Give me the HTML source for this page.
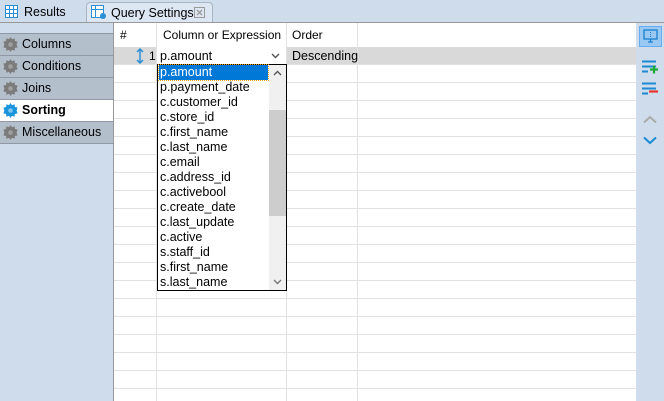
<!DOCTYPE html><html><head><style>
*{margin:0;padding:0;box-sizing:border-box}
body{width:664px;height:401px;background:#cedcec;font-family:"Liberation Sans","DejaVu Sans",sans-serif;font-size:12px;position:relative;overflow:hidden;color:#000}
.a{position:absolute}
.tab{position:absolute;height:22px;line-height:22px;font-size:12.5px}
.lt{position:absolute;left:0;width:113px;height:22px;background:#b4bfcc;border-top:1px solid #8f98a4;line-height:20px;padding-left:22px;font-size:12.5px}
.lt svg{position:absolute;left:3px;top:3px}
.hl{position:absolute;left:114px;width:522px;height:1px;background:#e2e2e2}
.vl{position:absolute;top:23px;width:1px;height:378px;background:#e2e2e2}
.it{position:absolute;left:160px;height:15px;line-height:15px;font-size:12.5px}
</style></head><body>
<svg width="0" height="0" style="position:absolute"><defs><g id="g"><path d="M7.5 0L9 2.2L11.6 1.3L11.9 4L14.6 4.6L13.6 7.5L14.6 10.4L11.9 11L11.6 13.7L9 12.8L7.5 15L6 12.8L3.4 13.7L3.1 11L0.4 10.4L1.4 7.5L0.4 4.6L3.1 4L3.4 1.3L6 2.2Z"/></g></defs></svg>
<div class="tab" style="left:0;top:1px;width:85px;padding-left:24px">Results</div>
<svg class="a" style="left:5px;top:5px" width="13" height="13"><rect x="0.5" y="0.5" width="12" height="12" fill="#fff" stroke="#2b8fd6"/><path d="M0 4.5H13M0 8.5H13M4.5 0V13M8.5 0V13" stroke="#2b8fd6"/></svg>
<div class="a" style="left:86px;top:2px;width:127px;height:21px;background:#dde7f3;border:1px solid #aab5c2;border-bottom:none;border-radius:4px 4px 0 0"></div>
<svg class="a" style="left:91px;top:5px" width="16" height="15"><rect x="0.5" y="0.5" width="12" height="12" fill="#fff" stroke="#2b8fd6"/><path d="M0 4.5H13M4.5 0V13" stroke="#2b8fd6"/><circle cx="12" cy="11" r="3" fill="#2b8fd6"/></svg>
<div class="tab" style="left:111px;top:2px">Query Settings</div>
<svg class="a" style="left:194px;top:7px" width="11" height="11"><rect x="0.5" y="0.5" width="10" height="10" fill="none" stroke="#999"/><path d="M3 3L8 8M8 3L3 8" stroke="#999" stroke-width="1.3"/></svg>
<div class="a" style="left:0;top:22px;width:664px;height:1px;background:#999"></div>
<div class="a" style="left:114px;top:23px;width:522px;height:378px;background:#fff"></div>
<div class="a" style="left:113px;top:23px;width:1px;height:378px;background:#999"></div>
<div class="lt" style="top:33px"><svg width="15" height="15" fill="#7b7b7b"><use href="#g"/><circle cx="7.5" cy="7.5" r="2.3" fill="#a0a0a0"/></svg>Columns</div>
<div class="lt" style="top:55px"><svg width="15" height="15" fill="#7b7b7b"><use href="#g"/><circle cx="7.5" cy="7.5" r="2.3" fill="#a0a0a0"/></svg>Conditions</div>
<div class="lt" style="top:77px"><svg width="15" height="15" fill="#7b7b7b"><use href="#g"/><circle cx="7.5" cy="7.5" r="2.3" fill="#a0a0a0"/></svg>Joins</div>
<div class="lt" style="top:99px;background:#fff;font-weight:bold"><svg width="15" height="15" fill="#1a94db"><use href="#g"/><circle cx="7.5" cy="7.5" r="2.3" fill="#7cc6f0"/></svg>Sorting</div>
<div class="lt" style="top:121px;border-bottom:1px solid #8f98a4;height:23px"><svg width="15" height="15" fill="#7b7b7b"><use href="#g"/><circle cx="7.5" cy="7.5" r="2.3" fill="#a0a0a0"/></svg>Miscellaneous</div>
<div class="a" style="left:114px;top:47px;width:522px;height:18px;background:#d9d9d9"></div>
<div class="hl" style="top:64px"></div>
<div class="hl" style="top:82px"></div><div class="hl" style="top:100px"></div><div class="hl" style="top:118px"></div><div class="hl" style="top:136px"></div><div class="hl" style="top:154px"></div><div class="hl" style="top:172px"></div><div class="hl" style="top:190px"></div><div class="hl" style="top:208px"></div><div class="hl" style="top:226px"></div><div class="hl" style="top:244px"></div><div class="hl" style="top:262px"></div><div class="hl" style="top:280px"></div><div class="hl" style="top:298px"></div><div class="hl" style="top:316px"></div><div class="hl" style="top:334px"></div><div class="hl" style="top:352px"></div><div class="hl" style="top:370px"></div><div class="hl" style="top:388px"></div>
<div class="vl" style="left:156px"></div><div class="vl" style="left:286px"></div><div class="vl" style="left:357px"></div>
<div class="a" style="left:120px;top:28px;font-size:12px">#</div>
<div class="a" style="left:163px;top:28px;font-size:12px">Column or Expression</div>
<div class="a" style="left:292px;top:28px;font-size:12px">Order</div>
<svg class="a" style="left:136px;top:48px" width="8" height="16"><path d="M4 1V15M1 4L4 1L7 4M1 12L4 15L7 12" stroke="#2b8fd6" stroke-width="1.5" fill="none"/></svg>
<div class="a" style="left:149px;top:49px;font-size:12px">1</div>
<div class="a" style="left:157px;top:47px;width:129px;height:17px;background:#fff"></div>
<div class="a" style="left:160px;top:49px;font-size:12.5px">p.amount</div>
<svg class="a" style="left:271px;top:53px" width="9" height="6"><path d="M1 1L4.5 4.5L8 1" stroke="#555" stroke-width="1.4" fill="none"/></svg>
<div class="a" style="left:292px;top:49px;font-size:12.5px">Descending</div>
<div class="a" style="left:157px;top:64px;width:130px;height:227px;background:#fff;border:1px solid #000"></div>
<div class="a" style="left:159px;top:65px;width:109px;height:15px;background:#0078d7;outline:1px dotted #f0a000"></div>
<div class="a" style="left:269px;top:65px;width:17px;height:225px;background:#f0f0f0"></div>
<div class="a" style="left:269px;top:110px;width:17px;height:106px;background:#cdcdcd"></div>
<svg class="a" style="left:273px;top:70px" width="9" height="6"><path d="M1 5L4.5 1.5L8 5" stroke="#555" stroke-width="1.4" fill="none"/></svg>
<svg class="a" style="left:273px;top:279px" width="9" height="6"><path d="M1 1L4.5 4.5L8 1" stroke="#777" stroke-width="1.4" fill="none"/></svg>
<div class="it" style="top:65px;color:#fff">p.amount</div>
<div class="it" style="top:80px">p.payment_date</div>
<div class="it" style="top:95px">c.customer_id</div>
<div class="it" style="top:110px">c.store_id</div>
<div class="it" style="top:125px">c.first_name</div>
<div class="it" style="top:140px">c.last_name</div>
<div class="it" style="top:155px">c.email</div>
<div class="it" style="top:170px">c.address_id</div>
<div class="it" style="top:185px">c.activebool</div>
<div class="it" style="top:200px">c.create_date</div>
<div class="it" style="top:215px">c.last_update</div>
<div class="it" style="top:230px">c.active</div>
<div class="it" style="top:245px">s.staff_id</div>
<div class="it" style="top:260px">s.first_name</div>
<div class="it" style="top:275px">s.last_name</div>
<div class="a" style="left:639px;top:26px;width:23px;height:21px;background:#99c9f2;border:1px solid #66aef0"></div>
<svg class="a" style="left:643px;top:29px" width="16" height="15"><rect x="1" y="1" width="13" height="9" fill="none" stroke="#1a7fd0" stroke-width="1.3"/><path d="M7.5 3V9" stroke="#1a7fd0" stroke-dasharray="1 1"/><path d="M5 13H10M7.5 10V13" stroke="#1a7fd0" stroke-width="1.3"/></svg>
<svg class="a" style="left:642px;top:60px" width="18" height="15"><path d="M0 1.5H14M0 6.5H14M0 11.5H6" stroke="#1a8ad4" stroke-width="2"/><path d="M8 9.5H16M12 5.5V13.5" stroke="#1fa83a" stroke-width="2.2"/></svg>
<svg class="a" style="left:642px;top:82px" width="18" height="14"><path d="M0 1.5H14M0 6.5H14M0 11.5H6" stroke="#1a8ad4" stroke-width="2"/><path d="M7 9.5H16" stroke="#e8352b" stroke-width="2.2"/></svg>
<svg class="a" style="left:643px;top:115px" width="14" height="9"><path d="M1 7.5L7 2L13 7.5" stroke="#aaa" stroke-width="2" fill="none"/></svg>
<svg class="a" style="left:643px;top:136px" width="14" height="9"><path d="M1 1.5L7 7L13 1.5" stroke="#1a8ad4" stroke-width="2" fill="none"/></svg>
</body></html>
